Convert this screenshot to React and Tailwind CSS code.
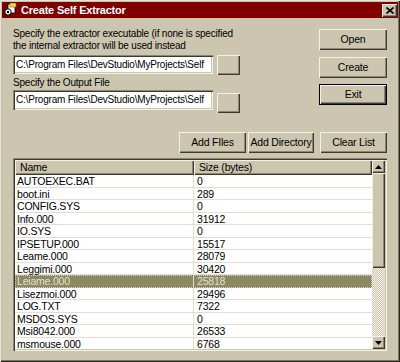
import React from "react";

const files = [
  ["AUTOEXEC.BAT", "0"],
  ["boot.ini", "289"],
  ["CONFIG.SYS", "0"],
  ["Info.000", "31912"],
  ["IO.SYS", "0"],
  ["IPSETUP.000", "15517"],
  ["Leame.000", "28079"],
  ["Leggimi.000", "30420"],
  ["Leiame.000", "25818"],
  ["Lisezmoi.000", "29496"],
  ["LOG.TXT", "7322"],
  ["MSDOS.SYS", "0"],
  ["Msi8042.000", "26533"],
  ["msmouse.000", "6768"],
];

const raised =
  "bg-[#ccc6b0] shadow-[inset_1px_1px_0_#f4f1e6,inset_-1px_-1px_0_#3c3a30,inset_-2px_-2px_0_#8a8670]";
const sunken =
  "shadow-[inset_1px_1px_0_#8a8670,inset_2px_2px_0_#3c3a30,inset_-1px_-1px_0_#f4f1e6,inset_-2px_-2px_0_#ccc6b0]";

const Btn = ({ children, className = "" }) => (
  <div className={`${raised} flex items-center justify-center text-[10.5px] tracking-[-0.2px] text-black whitespace-nowrap ${className}`}>
    {children}
  </div>
);

const TitleIcon = () => (
  <svg width="14" height="14" viewBox="0 0 14 14">
    <rect x="5" y="1" width="7" height="9" fill="#fff" stroke="#000" strokeWidth="0.8" />
    <rect x="7" y="0" width="6" height="4" fill="#f8e030" stroke="#806000" strokeWidth="0.6" />
    <circle cx="5" cy="9" r="3.2" fill="#fff" stroke="#000" strokeWidth="1" />
    <circle cx="5" cy="9" r="1.2" fill="#000" />
    <path d="M1 13 L4 11 M2 6 L3 7 M8 12 L7 11" stroke="#000" strokeWidth="1" />
  </svg>
);

const Arrow = ({ up }) => (
  <svg width="7" height="4" viewBox="0 0 7 4">
    {up ? <path d="M3.5 0 L7 4 L0 4 Z" fill="#000" /> : <path d="M0 0 L7 0 L3.5 4 Z" fill="#000" />}
  </svg>
);

export default function App() {
  return (
    <div
      className="w-[400px] h-[362px] bg-[#ccc6b0] p-[2px] shadow-[inset_1px_1px_0_#e6e2d4,inset_-1px_-1px_0_#2a2820,inset_-2px_-2px_0_#7a7664] overflow-hidden"
      style={{ fontFamily: '"Liberation Sans", Arial, sans-serif' }}
    >
      {/* title bar */}
      <div className="h-[16px] bg-[#800000] flex items-center pl-[1px] pr-[1px]">
        <TitleIcon />
        <span className="ml-[4px] text-[11px] tracking-[-0.2px] font-bold text-white leading-none">Create Self Extractor</span>
        <div className={`${raised} ml-auto w-[15px] h-[13px] flex items-center justify-center`}>
          <svg width="8" height="7" viewBox="0 0 8 7">
            <path d="M0.5 0.5 L7.5 6.5 M7.5 0.5 L0.5 6.5" stroke="#000" strokeWidth="1.6" />
          </svg>
        </div>
      </div>

      {/* body */}
      <div className="px-[11px] pt-[10px] text-[10px] tracking-[-0.2px]">
        <div className="flex justify-between">
          <div className="w-[227px] leading-[12px] text-black">
            <div className="whitespace-nowrap">
              Specify the extractor executable (if none is specified
              <br />
              the internal extractor will be used instead
            </div>
            <div className="flex items-start mt-[3px]">
              <div className={`${sunken} bg-white w-[200px] h-[19px] flex items-center pl-[3px] whitespace-nowrap overflow-hidden`}>
                C:\Program Files\DevStudio\MyProjects\Self
              </div>
              <Btn className="ml-[4px] w-[23px] h-[20px]" />
            </div>
            <div className="mt-[2px]">Specify the Output File</div>
            <div className="flex items-start mt-[1px]">
              <div className={`${sunken} bg-white w-[200px] h-[20px] flex items-center pl-[3px] whitespace-nowrap overflow-hidden`}>
                C:\Program Files\DevStudio\MyProjects\Self
              </div>
              <Btn className="ml-[4px] mt-[3px] w-[23px] h-[20px]" />
            </div>
          </div>
          <div className="w-[68px] flex flex-col pt-[1px]">
            <Btn className="h-[21px]">Open</Btn>
            <Btn className="h-[21px] mt-[7px]">Create</Btn>
            <div className="mt-[6px] border border-black">
              <Btn className="h-[19px]">Exit</Btn>
            </div>
          </div>
        </div>

        <div className="flex justify-end mt-[19px]">
          <Btn className="w-[67px] h-[21px]">Add FIles</Btn>
          <Btn className="w-[66px] h-[21px] ml-[2px]">Add Directory</Btn>
          <Btn className="w-[67px] h-[21px] ml-[6px]">Clear List</Btn>
        </div>

        {/* file list */}
        <div className={`${sunken} bg-white mt-[5px] h-[193px] p-[2px] flex`}>
          <div className="flex-1 overflow-hidden text-[10.5px] text-black">
            <div className="flex h-[15px]">
              <div className={`${raised} w-[179px] pl-[5px] leading-[15px]`}>Name</div>
              <div className={`${raised} flex-1 pl-[5px] leading-[15px]`}>Size (bytes)</div>
            </div>
            {files.map(([name, size], i) => {
              const sel = i === 8;
              return (
                <div
                  key={name}
                  className={`flex h-[12.5px] leading-[12px] ${
                    sel
                      ? "bg-[#8a8964] text-[#e4e0cc] outline outline-1 outline-dotted outline-[#d8d4c0] -outline-offset-1"
                      : "border-b border-[#e2ded2]"
                  }`}
                >
                  <div className="w-[179px] pl-[2px] border-r border-[#e2ded2] whitespace-nowrap">{name}</div>
                  <div className="flex-1 pl-[3px]">{size}</div>
                </div>
              );
            })}
          </div>
          <div className="w-[13px] flex flex-col bg-[#e8e4d8]">
            <Btn className="h-[13px] shrink-0">
              <Arrow up />
            </Btn>
            <div className={`${raised} h-[95px] shrink-0`} />
            <div className="flex-1 bg-[repeating-conic-gradient(#ccc6b0_0_25%,#f4f1e6_0_50%)] bg-[length:2px_2px]" />
            <Btn className="h-[13px] shrink-0">
              <Arrow />
            </Btn>
          </div>
        </div>
      </div>
    </div>
  );
}
